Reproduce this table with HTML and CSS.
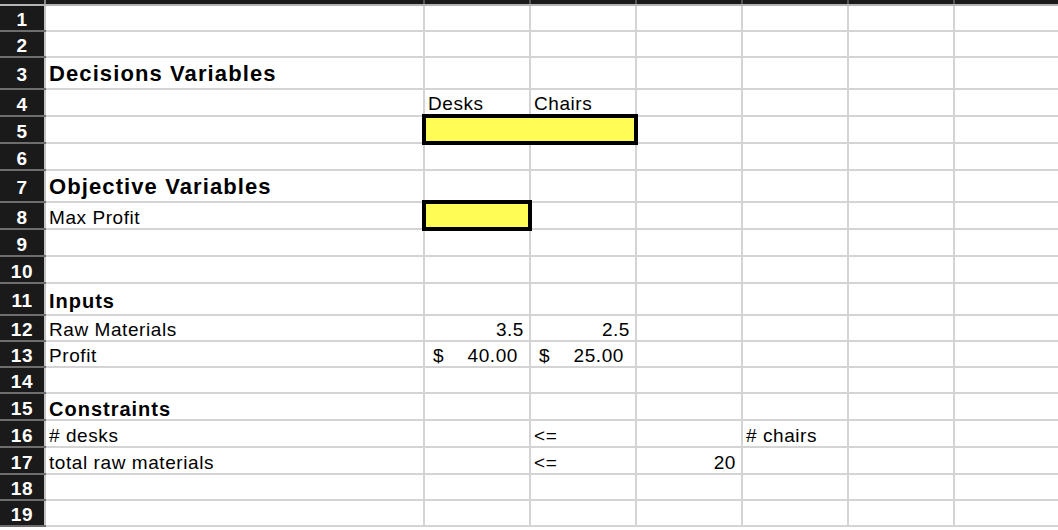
FILE: index.html
```html
<!DOCTYPE html>
<html lang="en">
<head>
    <meta charset="UTF-8">
    <meta name="viewport" content="width=device-width, initial-scale=1.0">
    <title>Desks and Chairs - Solver</title>
    <link rel="stylesheet" href="styles.css">
</head>
<body>

    <table class="sheet">
        <colgroup>
            <col class="c-head">
            <col class="c-a">
            <col class="c-n">
            <col class="c-n">
            <col class="c-n">
            <col class="c-n">
            <col class="c-n">
            <col class="c-n">
        </colgroup>
        <thead>
            <tr class="band">
                <th></th><th></th><th></th><th></th><th></th><th></th><th></th><th></th>
            </tr>
        </thead>
        <tbody>
            <tr>
                <th class="rownum">1</th><td></td><td></td><td></td><td></td><td></td><td></td><td></td>
            </tr>
            <tr>
                <th class="rownum">2</th><td></td><td></td><td></td><td></td><td></td><td></td><td></td>
            </tr>
            <tr class="tall">
                <th class="rownum">3</th><td class="h1">Decisions Variables</td><td></td><td></td><td></td><td></td><td></td><td></td>
            </tr>
            <tr class="r27">
                <th class="rownum">4</th><td></td><td>Desks</td><td>Chairs</td><td></td><td></td><td></td><td></td>
            </tr>
            <tr class="r27">
                <th class="rownum">5</th><td></td><td class="input" colspan="2"></td><td></td><td></td><td></td><td></td>
            </tr>
            <tr class="r27">
                <th class="rownum">6</th><td></td><td></td><td></td><td></td><td></td><td></td><td></td>
            </tr>
            <tr class="tall">
                <th class="rownum">7</th><td class="h1">Objective Variables</td><td></td><td></td><td></td><td></td><td></td><td></td>
            </tr>
            <tr class="r27">
                <th class="rownum">8</th><td>Max Profit</td><td class="input"></td><td></td><td></td><td></td><td></td><td></td>
            </tr>
            <tr class="r27">
                <th class="rownum">9</th><td></td><td></td><td></td><td></td><td></td><td></td><td></td>
            </tr>
            <tr class="r27">
                <th class="rownum">10</th><td></td><td></td><td></td><td></td><td></td><td></td><td></td>
            </tr>
            <tr class="tall">
                <th class="rownum">11</th><td class="h2">Inputs</td><td></td><td></td><td></td><td></td><td></td><td></td>
            </tr>
            <tr>
                <th class="rownum">12</th><td>Raw Materials</td><td class="num">3.5</td><td class="num">2.5</td><td></td><td></td><td></td><td></td>
            </tr>
            <tr>
                <th class="rownum">13</th><td>Profit</td>
                <td><div class="acct"><span>$</span><span>40.00</span></div></td>
                <td><div class="acct"><span>$</span><span>25.00</span></div></td>
                <td></td><td></td><td></td><td></td>
            </tr>
            <tr>
                <th class="rownum">14</th><td></td><td></td><td></td><td></td><td></td><td></td><td></td>
            </tr>
            <tr class="r27">
                <th class="rownum">15</th><td class="h2">Constraints</td><td></td><td></td><td></td><td></td><td></td><td></td>
            </tr>
            <tr class="r27">
                <th class="rownum">16</th><td># desks</td><td></td><td>&lt;=</td><td></td><td># chairs</td><td></td><td></td>
            </tr>
            <tr class="r27">
                <th class="rownum">17</th><td>total raw materials</td><td></td><td>&lt;=</td><td class="num">20</td><td></td><td></td><td></td>
            </tr>
            <tr>
                <th class="rownum">18</th><td></td><td></td><td></td><td></td><td></td><td></td><td></td>
            </tr>
            <tr>
                <th class="rownum">19</th><td></td><td></td><td></td><td></td><td></td><td></td><td></td>
            </tr>
        </tbody>
    </table>

</body>
</html>
```

FILE: styles.css
```css
body {
    margin: 0;
    background: #fff;
    overflow: hidden;
    font-family: "Liberation Sans", Arial, sans-serif;
    color: #000;
}
.sheet {
    border-collapse: collapse;
    table-layout: fixed;
    width: 1060px;
}
.c-head {
    width: 45px;
}
.c-a {
    width: 379px;
}
.c-n {
    width: 106px;
}

/* column letters band (hidden, only the dark strip shows) */
.band th {
    height: 4px;
    padding: 0;
    background: #1a1a1a;
    border: none;
    border-right: 2px solid #555;
    border-bottom: 2px solid #b4b4b4;
}
.band th:first-child {
    border-right-color: #8a8a8a;
}

.sheet tbody tr {
    height: 26px;
}
.sheet tbody tr.r27 {
    height: 27px;
}
.sheet tbody tr.tall {
    height: 32px;
}

.rownum {
    background: #1a1a1a;
    color: #fff;
    font-size: 19px;
    font-weight: bold;
    line-height: 20px;
    letter-spacing: 0.03em;
    text-align: center;
    vertical-align: bottom;
    padding: 0;
    border-top: 2px solid #6e6e6e;
    border-bottom: 2px solid #6e6e6e;
    border-right: 2px solid #c4c4c4;
    border-left: none;
}
.tall .rownum {
    padding-bottom: 3px;
}

.sheet td {
    border: 2px solid #d4d4d4;
    padding: 0 5px 0 3px;
    vertical-align: bottom;
    font-size: 19px;
    line-height: 20px;
    letter-spacing: 0.03em;
    white-space: nowrap;
    overflow: hidden;
}
.sheet td.h1 {
    font-size: 22px;
    font-weight: bold;
    line-height: 24px;
    letter-spacing: 0.05em;
    padding-bottom: 2px;
}
.sheet td.h2 {
    font-size: 20px;
    font-weight: bold;
    letter-spacing: 0.05em;
}
.tall td.h2 {
    padding-bottom: 3px;
}
.sheet td.num {
    text-align: right;
}
.sheet td.input {
    background: #fffd55;
    border: 4px solid #000;
}
.acct {
    display: flex;
    justify-content: space-between;
    padding: 0 6px 0 5px;
}
```
